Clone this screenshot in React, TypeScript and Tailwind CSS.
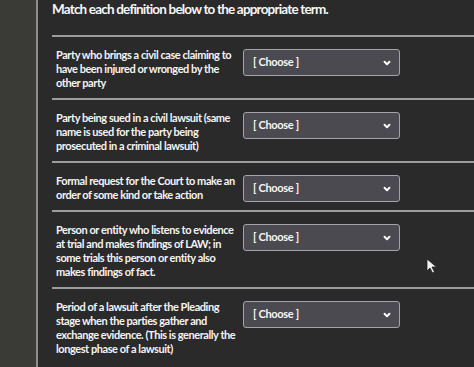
import { ChevronDown } from 'lucide-react';

const items = [
  'Party who brings a civil case claiming to have been injured or wronged by the other party',
  'Party being sued in a civil lawsuit (same name is used for the party being prosecuted in a criminal lawsuit)',
  'Formal request for the Court to make an order of some kind or take action',
  'Person or entity who listens to evidence at trial and makes findings of LAW; in some trials this person or entity also makes findings of fact.',
  'Period of a lawsuit after the Pleading stage when the parties gather and exchange evidence. (This is generally the longest phase of a lawsuit)',
];

const Cursor = () => (
  <svg className="absolute left-[426px] top-[258px] h-[16px] w-[12px]" viewBox="0 0 12 16">
    <path d="M1 1 L1 13 L4 10 L6.5 15 L8.5 14 L6 9 L10.5 9 Z" fill="#f2f2f2" stroke="#222" strokeWidth="0.8" />
  </svg>
);

function Row({ text }: { text: string }) {
  return (
    <div className="flex items-start border-t-2 border-[#9c9c9c] pt-[11px] pb-[8px] pl-[4px]">
      <p className="w-[182px] text-[11px] leading-[14px] font-bold tracking-[-0.04em] text-[#f4f4f4]">
        {text}
      </p>
      <div className="ml-[5px] mt-[1px] flex h-[27px] w-[157px] items-center justify-between rounded-[3px] border border-[#a4a4a8] bg-[#4a4a50] pl-[9px] pr-[7px]">
        <span className="text-[11px] font-bold tracking-[-0.03em] text-[#f6f6f6]">[ Choose ]</span>
        <ChevronDown className="h-[10px] w-[10px] text-white" strokeWidth={4.5} />
      </div>
    </div>
  );
}

export default function App() {
  return (
    <div className="relative flex h-[367px] w-[474px] overflow-hidden" style={{ fontFamily: 'Lato, "Open Sans", sans-serif' }}>
      <div className="w-[36px] bg-[#3a3a37]" />
      <div className="w-[2px] bg-[#8e8e8a]" />
      <div className="flex-1 bg-[#2a2a2a] pl-[14px]">
        <h1 className="text-[13.5px] leading-[18px] font-bold tracking-[-0.06em] text-[#f6f6f6]">
          Match each definition below to the appropriate term.
        </h1>
        <div className="mt-[17px]">
          {items.map((t) => (
            <Row key={t} text={t} />
          ))}
        </div>
      </div>
      <Cursor />
    </div>
  );
}
